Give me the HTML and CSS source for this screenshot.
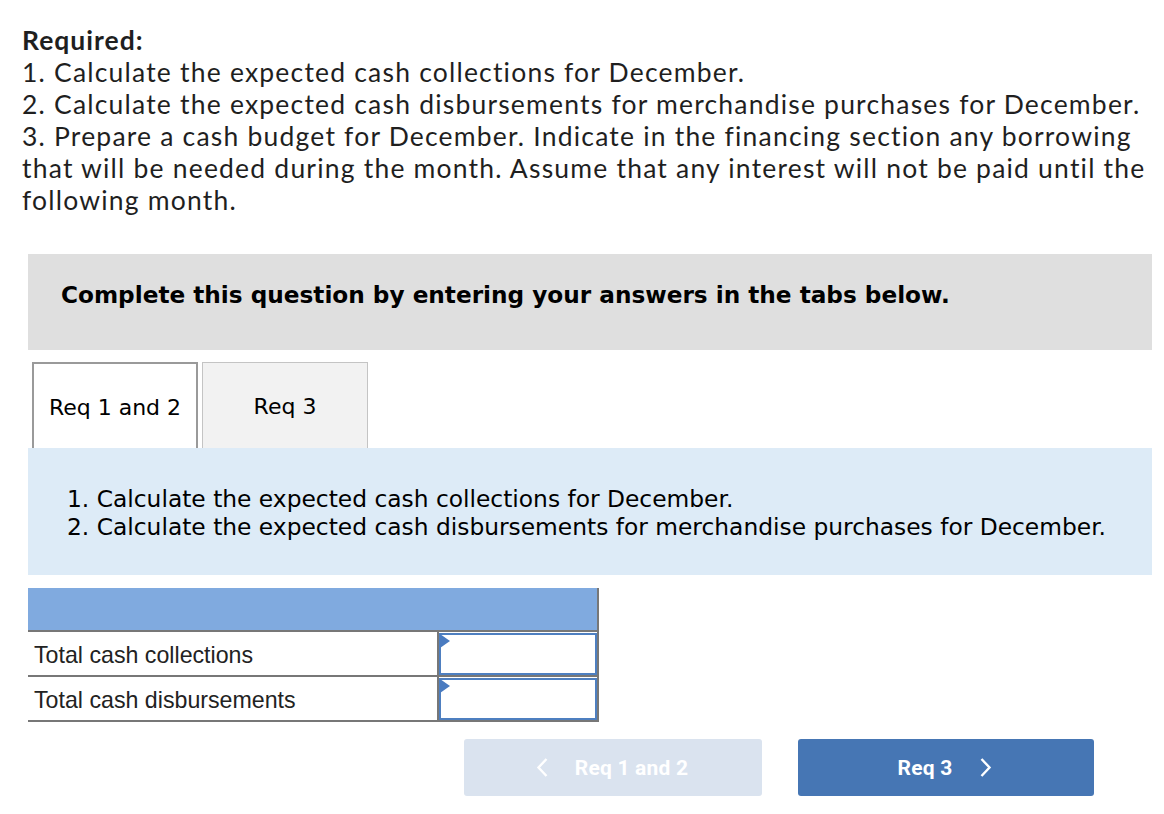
FILE: index.html
```html
<!DOCTYPE html>
<html>
<head>
<meta charset="utf-8">
<link rel="stylesheet" href="styles.css">
</head>
<body>
<div class="page">
  <div class="required">
    <div class="req-title">Required:</div>
    <div>1. Calculate the expected cash collections for December.</div>
    <div>2. Calculate the expected cash disbursements for merchandise purchases for December.</div>
    <div>3. Prepare a cash budget for December. Indicate in the financing section any borrowing that will be needed during the month. Assume that any interest will not be paid until the following month.</div>
  </div>

  <div class="notice">Complete this question by entering your answers in the tabs below.</div>

  <div class="tabs">
    <div class="tab active">Req 1 and 2</div>
    <div class="tab">Req 3</div>
  </div>

  <div class="panel">
    <div>1. Calculate the expected cash collections for December.</div>
    <div>2. Calculate the expected cash disbursements for merchandise purchases for December.</div>
  </div>

  <div class="grid">
    <div class="grid-head"></div>
    <div class="grid-row">
      <div class="label">Total cash collections</div>
      <div class="cell"><div class="input"><span class="flag"></span></div></div>
    </div>
    <div class="grid-row">
      <div class="label">Total cash disbursements</div>
      <div class="cell"><div class="input"><span class="flag"></span></div></div>
    </div>
  </div>

  <div class="nav">
    <div class="btn prev">
      <svg class="chev" width="12" height="19" viewBox="0 0 12 19"><path d="M10.5 1 L2.5 9.5 L10.5 18" fill="none" stroke="#fff" stroke-width="2.4"/></svg>
      <span>Req 1 and 2</span>
    </div>
    <div class="btn next">
      <span>Req 3</span>
      <svg class="chev" width="12" height="19" viewBox="0 0 12 19"><path d="M1.5 1 L9.5 9.5 L1.5 18" fill="none" stroke="#fff" stroke-width="2.4"/></svg>
    </div>
  </div>
</div>
</body>
</html>
```

FILE: styles.css
```css
* { box-sizing: border-box; }
body {
  margin: 0;
  background: #fff;
  color: #222;
}
.page {
  width: 1164px;
  padding: 24px 12px 0 28px;
}
.required {
  font-family: Lato, "Open Sans", sans-serif;
  font-size: 26.5px;
  line-height: 32px;
  letter-spacing: 1.2px;
  color: #1f1f1f;
  margin-left: -6px;
  width: 1130px;
}
.req-title { font-weight: 700; letter-spacing: 1px; }
.notice {
  margin-top: 38px;
  width: 1124px;
  height: 96px;
  background: #dfdfdf;
  font-family: Verdana, "DejaVu Sans", sans-serif;
  font-weight: 700;
  font-size: 23.2px;
  line-height: 27px;
  color: #000;
  padding: 27px 0 0 33px;
}
.tabs {
  display: flex;
  gap: 4px;
  margin-top: 12px;
  padding-left: 4px;
}
.tab {
  width: 166px;
  height: 86px;
  display: flex;
  align-items: center;
  justify-content: center;
  font-family: Verdana, "DejaVu Sans", sans-serif;
  font-size: 22px;
  color: #000;
  background: #f2f2f2;
  border: 1px solid #c4c4c4;
  border-bottom: none;
  padding-top: 2px;
}
.tab.active {
  background: #fff;
  border: 2px solid #9a9a9a;
  border-bottom: none;
}
.panel {
  width: 1124px;
  height: 127px;
  background: #ddebf7;
  font-family: Verdana, "DejaVu Sans", sans-serif;
  font-size: 23.35px;
  line-height: 28px;
  color: #000;
  padding: 37px 0 0 39px;
}
.grid {
  margin-top: 13px;
  width: 571px;
  border-right: 2px solid #777;
  font-family: Arial, "Liberation Sans", sans-serif;
  font-size: 23.2px;
  color: #222;
}
.grid-head {
  height: 44px;
  background: #80aadf;
  border-bottom: 2px solid #777;
}
.grid-row {
  display: flex;
  height: 45px;
  border-bottom: 2px solid #777;
}
.label {
  width: 409px;
  display: flex;
  align-items: center;
  padding-left: 6px;
  padding-top: 3px;
}
.cell {
  flex: 1;
  border-left: 2px solid #777;
  padding: 1px 0 0 0;
}
.input {
  position: relative;
  height: 42px;
  border: 2px solid #4e7fc0;
  background: #fff;
}
.flag {
  position: absolute;
  left: -1px;
  top: -1px;
  width: 0;
  height: 0;
  border-top: 7px solid transparent;
  border-bottom: 7px solid transparent;
  border-left: 10px solid #4a7bc0;
}
.nav {
  display: flex;
  gap: 36px;
  margin-top: 17px;
  padding-left: 436px;
}
.btn {
  height: 57px;
  border-radius: 3px;
  display: flex;
  align-items: center;
  justify-content: center;
  font-family: Roboto, "Liberation Sans", sans-serif;
  font-weight: 700;
  font-size: 21px;
  letter-spacing: 0.2px;
  color: #fff;
}
.btn.prev {
  width: 298px;
  background: #dae3ef;
  gap: 27px;
  padding-right: 2px;
}
.btn.next {
  width: 296px;
  background: #4676b4;
  gap: 28px;
  padding-right: 2px;
}
.chev { display: block; }
```
